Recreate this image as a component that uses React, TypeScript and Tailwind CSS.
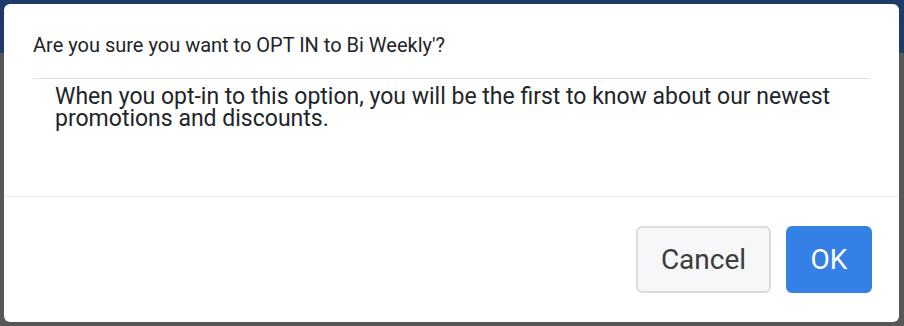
export default function App() {
  return (
    <div className="h-[326px] w-[904px] overflow-hidden bg-[linear-gradient(#1c3b6b_53px,#575757_53px)] p-1 font-['Roboto',sans-serif]">
      {/* Confirm dialog */}
      <div className="flex h-[318px] w-[895px] flex-col rounded-md bg-white">
        <div className="px-[29px] pt-[29px]">
          <h2 className="text-[20px] leading-[24px] text-[#212529]">
            Are you sure you want to OPT IN to Bi Weekly'?
          </h2>
          <div className="mt-[21px] h-px bg-[#dfe1e4]" />
          <p className="mt-[7px] pl-[22px] text-[23px] leading-[22px] text-[#212529]">
            When you opt-in to this option, you will be the first to know about our newest
            <br />
            promotions and discounts.
          </p>
        </div>

        <div className="mt-auto border-t border-[#e9eaec] px-[27px] pt-[29px] pb-[29px]">
          <div className="flex justify-end gap-[15px]">
            <button className="h-[67px] w-[135px] rounded-md border-2 border-[#dcdcdc] bg-[#f6f7f9] text-[28px] text-[#3c3c3c]">
              Cancel
            </button>
            <button className="h-[67px] w-[86px] rounded-md bg-[#3580e4] text-[28px] text-white">
              OK
            </button>
          </div>
        </div>
      </div>
    </div>
  );
}
